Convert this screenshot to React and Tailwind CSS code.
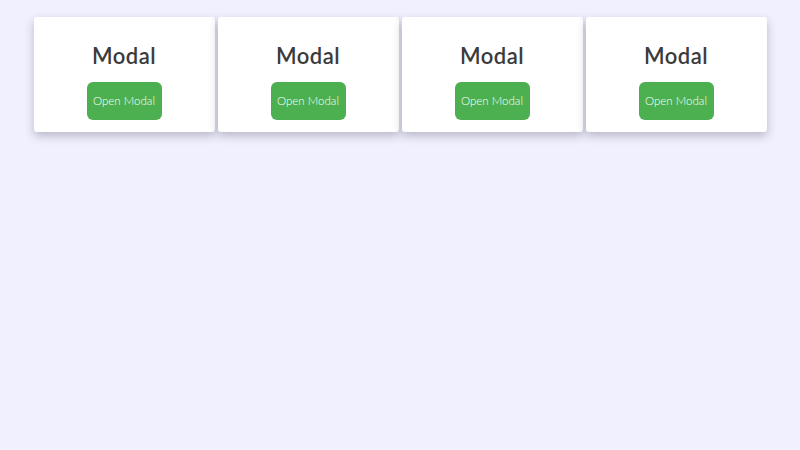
const cards = [1, 2, 3, 4];

const App = () => {
  return (
    <div
      className="min-h-screen w-full bg-[#f0f0fe] pt-[17px]"
      style={{ fontFamily: "Lato, 'Noto Sans', sans-serif" }}
    >
      <div className="flex justify-center gap-[3px]">
        {cards.map((n) => (
          <div
            key={n}
            className="w-[181px] h-[115px] bg-white rounded-[3px] shadow-[0_4px_10px_rgba(40,40,70,0.28)] flex flex-col items-center pt-[26px]"
          >
            <h2 className="text-[22px] leading-[26px] font-semibold text-[#3b3b3b] tracking-[0.5px]">
              Modal
            </h2>
            <button className="mt-[13px] w-[75px] h-[38px] rounded-[6px] bg-[#4caf50] text-white text-[11.5px] font-light">
              Open Modal
            </button>
          </div>
        ))}
      </div>
    </div>
  );
};

export default App;
